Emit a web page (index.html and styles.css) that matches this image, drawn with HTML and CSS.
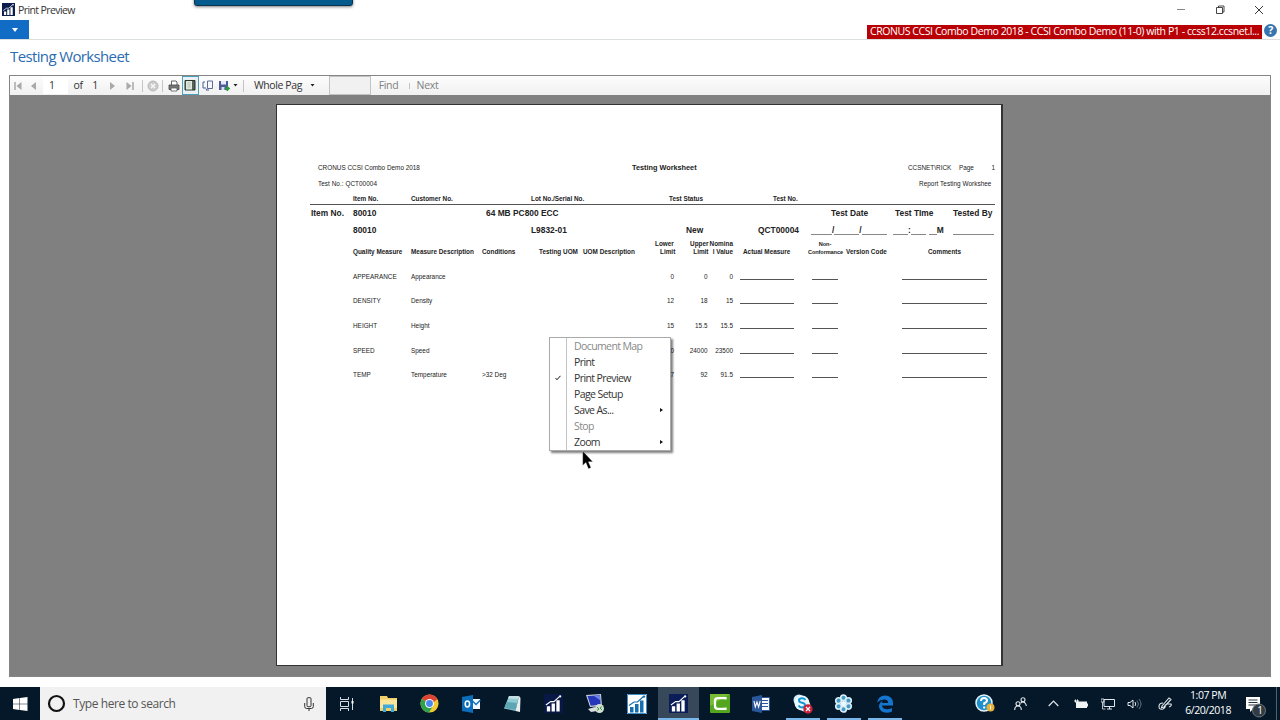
FILE: index.html
```html
<!DOCTYPE html>
<html lang="en">
<head>
    <meta charset="UTF-8">
    <meta name="viewport" content="width=device-width, initial-scale=1.0">
    <title>Print Preview</title>
    <link rel="stylesheet" href="styles.css">
</head>
<body>
    <svg width="0" height="0" class="defs">
        <symbol id="chart" viewBox="0 0 20 20">
            <path d="M3 13h3.500v5.500H3zM8 10h3.500v8.500H8zM13 6.500h3.500v12H13z" fill="currentColor"/>
            <path d="M2 11.500l5-3.500h3.500L16.500 2.500" fill="none" stroke="currentColor" stroke-width="1.200"/>
            <circle cx="17" cy="2.600" r="1.200" fill="currentColor"/>
        </symbol>
    </svg>

    <div class="share-tab"></div>

    <div class="titlebar">
        <svg class="app-icon" viewBox="0 0 20 20"><rect width="20" height="20" fill="#0b1d4d"/><use href="#chart"/></svg>
        <span class="title">Print Preview</span>
        <div class="window-buttons">
            <svg viewBox="0 0 10 10"><path d="M1 4.500h8" stroke="#888"/></svg>
            <svg viewBox="0 0 10 10"><path d="M1.500 2.500h6v6h-6zM3.500 2.500v-1.500h5.500v6H7.500" fill="none" stroke="#333" stroke-width=".9"/></svg>
            <svg viewBox="0 0 10 10"><path d="M1 1l8 8M9 1l-8 8" stroke="#222" stroke-width=".9"/></svg>
        </div>
    </div>

    <div class="ribbon">
        <div class="file-button"><svg width="6" height="4"><path d="M0 0h6L3 4z" fill="#fff"/></svg></div>
        <div class="company">CRONUS CCSI Combo Demo 2018 - CCSI Combo Demo (11-0) with P1 - ccss12.ccsnet.l...</div>
        <div class="help">?</div>
    </div>

    <h1>Testing Worksheet</h1>

    <div class="viewer">
        <div class="toolbar">
            <div><svg width="8" height="8"><path d="M1 0v8" stroke="#a9a9a9" stroke-width="1.500"/><path d="M7.500 0v8L2.500 4z" fill="#a9a9a9"/></svg></div>
            <div><svg width="6" height="8"><path d="M5 0v8L0 4z" fill="#a9a9a9"/></svg></div>
            <div class="page-input">1</div>
            <div>of</div>
            <div>1</div>
            <div><svg width="6" height="8"><path d="M1 0v8l5-4z" fill="#a9a9a9"/></svg></div>
            <div><svg width="8" height="8"><path d="M.5 0v8l5-4z" fill="#a9a9a9"/><path d="M7 0v8" stroke="#a9a9a9" stroke-width="1.500"/></svg></div>
            <div class="sep"></div>
            <div><svg width="12" height="12"><circle cx="6" cy="6" r="5" fill="#ccc" stroke="#b8b8b8"/><path d="M4 4l4 4M8 4l-4 4" stroke="#f6f6f6" stroke-width="1.500"/></svg></div>
            <div class="sep"></div>
            <div><svg width="12" height="12"><path d="M3.500 5V1h4.500l1 1v3" fill="#fff" stroke="#666"/><path d="M1 5h10v4.500H1z" fill="#777" stroke="#444" stroke-width=".8"/><path d="M3 8h6v3H3z" fill="#fff" stroke="#555" stroke-width=".8"/></svg></div>
            <div class="pressed"><svg width="12" height="11"><path d="M1 .5h10v9.500H1z" fill="#54645a" stroke="#26362e"/><path d="M2 1h6v8.500H2z" fill="#dfe8df"/><path d="M3.500 3h3M3.500 5h3M3.500 7h3" stroke="#a3aaa3" stroke-width=".7"/></svg></div>
            <div><svg width="12" height="11"><path d="M5.500 1h5v7.500h-5z" fill="#f5f7ff" stroke="#5d6c91"/><path d="M1 2v6h3M1 2h2M4 10h3M5 8.500l-1 1.500" fill="none" stroke="#4c5f93"/></svg></div>
            <div><svg width="12" height="12"><path d="M1 1h9v9H1z" fill="#4c5c99"/><path d="M3 1h5v3.500H3z" fill="#e8ecfa"/><path d="M3.500 7h3v3h-3z" fill="#dde"/><path d="M6.500 8.500h4M9 6v5l2.800-2.500z" fill="#2c9b3c" stroke="#2c9b3c"/></svg></div>
            <div><svg width="5" height="3"><path d="M.5 0h4L2.500 2.500z" fill="#222"/></svg></div>
            <div class="sep"></div>
            <div class="zoom-select"><span>Whole Pag</span><svg width="5" height="3"><path d="M.5 0h4L2.500 2.500z" fill="#222"/></svg></div>
            <div class="find-input"></div>
            <div class="muted">Find</div>
            <div class="sep short"></div>
            <div class="muted">Next</div>
        </div>

        <div class="report">
            <div class="row head-a">
                <span>CRONUS CCSI Combo Demo 2018</span>
                <b class="report-title">Testing Worksheet</b>
                <span>CCSNET\RICK</span>
                <span>Page</span>
                <span class="right">1</span>
            </div>
            <div class="row head-b">
                <span>Test No.: QCT00004</span>
                <span>Report Testing Workshee</span>
            </div>
            <div class="row lot-head">
                <span></span>
                <span>Item No.</span>
                <span>Customer No.</span>
                <span>Lot No./Serial No.</span>
                <span>Test Status</span>
                <span>Test No.</span>
            </div>
            <div class="row item">
                <span>Item No.</span>
                <span>80010</span>
                <span>64 MB PC800 ECC</span>
                <span>Test Date</span>
                <span>Test TIme</span>
                <span>Tested By</span>
            </div>
            <div class="row lot">
                <span></span>
                <span>80010</span>
                <span>L9832-01</span>
                <span>New</span>
                <span>QCT00004</span>
                <span class="blanks"><i class="w21"></i>/<i class="w25"></i>/<i class="w25"></i></span>
                <span class="blanks"><i class="w16"></i>:<i class="w16"></i><i class="w8"></i>M</span>
                <span class="blanks"><i class="w41"></i></span>
            </div>
            <div class="row cols col-head">
                <span></span>
                <span>Quality Measure</span>
                <span>Measure Description</span>
                <span>Conditions</span>
                <span>Testing UOM</span>
                <span>UOM Description</span>
                <span class="lower">Lower<br><em>Limit</em></span>
                <span class="right upper">Upper<br>Limit</span>
                <span class="right">Nomina<br>l Value</span>
                <span class="actual">Actual Measure</span>
                <span class="center narrow">Non-<br>Conformance</span>
                <span class="version">Version Code</span>
                <span class="center">Comments</span>
            </div>
            <div class="row cols measure">
                <span></span><span>APPEARANCE</span><span>Appearance</span><span></span><span></span><span></span>
                <span class="right">0</span><span class="right">0</span><span class="right">0</span>
                <i class="line actual-line"></i><i class="line non-line"></i><span></span><i class="line"></i>
            </div>
            <div class="row cols measure">
                <span></span><span>DENSITY</span><span>Density</span><span></span><span></span><span></span>
                <span class="right">12</span><span class="right">18</span><span class="right">15</span>
                <i class="line actual-line"></i><i class="line non-line"></i><span></span><i class="line"></i>
            </div>
            <div class="row cols measure">
                <span></span><span>HEIGHT</span><span>Height</span><span></span><span></span><span></span>
                <span class="right">15</span><span class="right">15.5</span><span class="right">15.5</span>
                <i class="line actual-line"></i><i class="line non-line"></i><span></span><i class="line"></i>
            </div>
            <div class="row cols measure">
                <span></span><span>SPEED</span><span>Speed</span><span></span><span></span><span></span>
                <span class="right">0</span><span class="right">24000</span><span class="right">23500</span>
                <i class="line actual-line"></i><i class="line non-line"></i><span></span><i class="line"></i>
            </div>
            <div class="row cols measure">
                <span></span><span>TEMP</span><span>Temperature</span><span>&gt;32 Deg</span><span></span><span></span>
                <span class="right">7</span><span class="right">92</span><span class="right">91.5</span>
                <i class="line actual-line"></i><i class="line non-line"></i><span></span><i class="line"></i>
            </div>
        </div>
    </div>

    <div class="context-menu">
        <div class="menu-item disabled"><i></i><span>Document Map</span></div>
        <div class="menu-item"><i></i><span>Print</span></div>
        <div class="menu-item"><i><svg width="6" height="6"><path d="M.5 3l1.500 1.700L5.500 .8" fill="none" stroke="#111"/></svg></i><span>Print Preview</span></div>
        <div class="menu-item"><i></i><span>Page Setup</span></div>
        <div class="menu-item sub"><i></i><span>Save As...</span></div>
        <div class="menu-item disabled"><i></i><span>Stop</span></div>
        <div class="menu-item sub"><i></i><span>Zoom</span></div>
    </div>
    <svg class="cursor" width="12" height="20" viewBox="0 0 12 20"><path d="M.7 1v14.500l3.200-3 2.500 6.300 2.600-1-2.600-6h4.400z" fill="#000" stroke="#fff" stroke-width=".3"/></svg>

    <div class="taskbar">
        <div class="start"><svg width="15" height="14" viewBox="0 0 15 14"><path d="M0 2l6.500-1v5.700H0zM7 .9L14.500 0v6.700H7zM0 7.200h6.500V13L0 12zM7 7.200h7.500V14L7 13z" fill="#fff"/></svg></div>
        <div class="search">
            <svg width="19" height="19"><circle cx="9.500" cy="9.500" r="7.500" fill="none" stroke="#111" stroke-width="2.200"/></svg>
            <span>Type here to search</span>
            <svg class="mic" width="10" height="14"><rect x="3" y=".7" width="4" height="9" rx="1" fill="none" stroke="#333"/><path d="M.7 6v3.500q0 2 2 2h4.600q2 0 2-2V6M5 11.500V14" fill="none" stroke="#333"/></svg>
        </div>
        <div class="apps">
            <div><svg width="15" height="14"><path d="M1.500 0v2.500h8V0M1.500 14v-2.500h8V14M1.500 4.500h8v5h-8zM13.500 1v12" fill="none" stroke="#d5dce2"/><path d="M12.500 4h2v2.500h-2z" fill="#fff"/></svg></div>
            <div><svg width="19" height="17"><path d="M1 1h7l1 2h9v13H1z" fill="#f1cf69"/><path d="M1 4.500h17V13H1z" fill="#fbe59a"/><path d="M4 17V9.500h11V17h-3v-4H7v4z" fill="#3fa9dc"/></svg></div>
            <div><svg width="19" height="19" viewBox="-10 -10 20 20"><circle r="9.500" fill="#f2c931"/><path d="M0 0L-8.200-4.700A9.500 9.500 0 0 1 8.200-4.700z" fill="#dc4335"/><path d="M0 0l-8.200-4.700A9.500 9.500 0 0 0-.5 9.500L4 2z" fill="#2da14c"/><path d="M0-4.700h8.200L4-1z" fill="#dc4335"/><circle r="4.700" fill="#fff"/><circle r="3.600" fill="#4a87ee"/></svg></div>
            <div><svg width="19" height="18"><path d="M9 4h9v10H9z" fill="#f2f8fd"/><path d="M10 5.500l4 4 4.500-4.500" fill="none" stroke="#0b6ebd" stroke-width="1.300"/><path d="M0 2l11-2v18L0 16z" fill="#0b6ebd"/><ellipse cx="5.400" cy="9" rx="2.200" ry="2.900" fill="none" stroke="#fff" stroke-width="1.500"/></svg></div>
            <div><svg width="19" height="18"><path d="M6 1h10l-3.500 15L1 13.500z" fill="#8ecbd5"/><path d="M16 1l1.500 2-.5 14-4.500-1z" fill="#e7eff0"/><path d="M6 1h10l-.7 3L5 3.500z" fill="#c5dfe2"/><path d="M4 7l10 1-1.500 7-11-2z" fill="#5ca6b4"/></svg></div>
            <div><svg width="19" height="19" viewBox="0 0 20 20" color="#fff"><rect width="20" height="20" fill="#071846"/><use href="#chart"/></svg></div>
            <div><svg width="20" height="20"><path d="M1 1l15-1 1 12-12 1z" fill="#c8cfdb"/><path d="M2.500 2l12.500-.8.7 9.500-10 1z" fill="#2637ba"/><path d="M9 2l6-.6.5 5z" fill="#6f83e8"/><path d="M3 15l7-2 2 4-6 1z" fill="#d9dde2"/><circle cx="14.500" cy="14.500" r="4.500" fill="#d4dfd1"/><path d="M12 13l2 2-2 1.500M17 12.500l-2 1.500 2 2" fill="none" stroke="#3b9a49"/></svg></div>
            <div><svg width="20" height="20" viewBox="0 0 20 20" color="#156eb0"><rect width="20" height="20" fill="#fff"/><use href="#chart"/><path d="M.5.5h19v19H.5z" fill="none" stroke="#3c8dc8"/></svg></div>
            <div class="active"><svg width="19" height="19" viewBox="0 0 20 20" color="#fff"><rect width="20" height="20" fill="#0a1d59"/><use href="#chart"/></svg></div>
            <div><svg width="20" height="19"><rect width="20" height="19" rx="1" fill="#55a61f"/><path d="M0 0h20L0 12z" fill="#76bd35"/><path d="M15.500 5.500V4.200H7.800Q5 4.200 5 7v5q0 2.800 2.800 2.800h7.700v-1.300" fill="none" stroke="#fff" stroke-width="2.300"/></svg></div>
            <div><svg width="18" height="18"><path d="M9 2.500h8.500v13H9z" fill="#f5f8fc" stroke="#2b579a"/><path d="M10 5.500h6M10 8.500h6M10 11.500h6" stroke="#2b579a"/><path d="M0 2l10-2v18L0 16z" fill="#2b579a"/><path d="M2 6l1.300 6L5 7l1.600 5L8.200 6" fill="none" stroke="#fff" stroke-width="1.100"/></svg></div>
            <div class="running"><svg width="20" height="20"><circle cx="6" cy="6" r="5.500" fill="#d4eefa"/><circle cx="12" cy="12" r="5.500" fill="#d4eefa"/><circle cx="9" cy="9" r="7.500" fill="#edf9ff"/><path d="M12.500 6Q11 4 8.500 4.300 5.800 4.700 6 6.600 6.200 8.200 9 8.700q3.200.6 3 2.700-.2 2-3.200 2Q6.500 13.400 5.500 11.500" fill="none" stroke="#1498d5" stroke-width="2"/><circle cx="15" cy="15" r="4.700" fill="#cb2037"/><path d="M13 13l4 4M17 13l-4 4" stroke="#fff" stroke-width="1.200"/></svg></div>
            <div class="running"><svg width="19" height="19" viewBox="-10 -10 20 20"><g fill="#459ac3" stroke="#d8eff8" stroke-width="1.700"><circle cy="-6" r="3"/><circle cx="5.200" cy="-3" r="3"/><circle cx="5.200" cy="3" r="3"/><circle cy="6" r="3"/><circle cx="-5.200" cy="3" r="3"/><circle cx="-5.200" cy="-3" r="3"/></g><circle r="2.700" fill="#eef9ff"/></svg></div>
            <div class="running"><svg width="18" height="18"><path d="M1 7.500Q2.500.5 9 .5q7.500 0 8 7.500v2.500H6q.5 3.800 5 3.800 2.500 0 5-1.300v3.500q-2.500 1.300-5.500 1.300Q4 17.500 3 12 2.600 8 7 5.500 5.500 7 5.700 8h6.500q0-3.500-4-3.500Q4 4.500 1 7.500z" fill="#1476cf"/></svg></div>
        </div>
        <div class="tray">
            <div><svg width="20" height="19"><circle cx="9" cy="9" r="8" fill="#218fca" stroke="#e6f4fa" stroke-width="1.500"/><path d="M6 7q0-3 3-3t3 2.600Q12 8.300 9.200 9.300V11M9.200 12.500v2" fill="none" stroke="#fff" stroke-width="2"/><circle cx="15.500" cy="13.500" r="4" fill="#e7b13b"/><path d="M15.500 11.500v4" stroke="#fff"/></svg></div>
            <div><svg width="13" height="14"><g fill="none" stroke="#e4e8eb" stroke-width="1.100"><circle cx="9" cy="2.700" r="2"/><circle cx="4" cy="6.700" r="2"/><path d="M.7 13q0-4 3.300-4t3.300 4M6.700 6Q9 4 11 6q1.200 1.400 1.300 3"/></g></svg></div>
            <div><svg width="11" height="7"><path d="M.7 6L5.500 1.200 10.300 6" fill="none" stroke="#e4e8eb" stroke-width="1.200"/></svg></div>
            <div><svg width="14" height="10"><path d="M2 2.500h11v6.500H2z" fill="#f1f3f5"/><path d="M13 4.500h1v3h-1z" fill="#eee"/><path d="M0 2h5M1.500.5v3M3.500.5v3" stroke="#eee"/></svg></div>
            <div><svg width="14" height="12"><path d="M3 1.500h10.500v7H3zM6 11h5M8.500 8.500V11" fill="none" stroke="#e4e8eb"/><path d="M0 1h3v3H0zM1.500 4v7h3" fill="none" stroke="#e4e8eb" stroke-width=".8"/></svg></div>
            <div><svg width="15" height="12"><path d="M1 4.500h2L6 2v8L3 7.500H1z" fill="none" stroke="#e4e8eb"/><path d="M8 4q1.500 2 0 4" fill="none" stroke="#e4e8eb"/><path d="M10 2.500q3 3.500 0 7M12 1q4 5 0 10" fill="none" stroke="#66737e"/></svg></div>
            <div><svg width="14" height="13"><path d="M5 6Q1 6 1 9.500T5 12q3-1 2-4.500M4 9L11 1l2 1.500L6 10l-2.500.7zM9 7h4q1 2-2 3" fill="none" stroke="#e4e8eb" stroke-width="1.100"/></svg></div>
        </div>
        <div class="clock">1:07 PM<br>6/20/2018</div>
        <div class="notify"><svg width="20" height="21"><path d="M0 0h14v12H7l-3 3v-3H0z" fill="#fff"/><path d="M2.500 3h9M2.500 5.500h9M2.500 8h9" stroke="#26323d"/><circle cx="13" cy="13.500" r="6.500" fill="#333b42" stroke="#6d747a"/></svg><span>1</span></div>
    </div>
</body>
</html>
```
FILE: styles.css
```css
* {
    box-sizing: border-box;
}
body {
    margin: 0;
    width: 1280px;
    height: 720px;
    overflow: hidden;
    display: flex;
    flex-direction: column;
    background-color: #fff;
    font-family: "Open Sans", "Noto Sans", sans-serif;
    font-size: 10.5px;
    letter-spacing: -0.5px;
    color: #333;
}
svg {
    display: block;
    flex: none;
}
.defs {
    position: absolute;
}
.share-tab {
    position: absolute;
    left: 194px;
    top: -5px;
    width: 159px;
    height: 11px;
    background-color: #045a8d;
    border: 1px solid #06334f;
    border-radius: 3px;
    box-shadow: 0 1px 3px rgba(0,0,0,0.5);
}

/* window frame */
.titlebar {
    height: 19px;
    display: flex;
    align-items: center;
    padding-left: 2px;
}
.app-icon {
    width: 13px;
    height: 13px;
    color: #fff;
}
.title {
    margin-left: 3px;
    letter-spacing: -0.6px;
}
.window-buttons {
    display: flex;
    gap: 29px;
    margin-left: auto;
    padding-right: 16px;
}
.window-buttons svg {
    width: 10px;
    height: 10px;
}
.ribbon {
    height: 21px;
    display: flex;
    align-items: center;
    border-bottom: 1px solid #dcdfe0;
}
.file-button {
    width: 29px;
    height: 19px;
    margin-top: 1px;
    display: flex;
    align-items: center;
    justify-content: center;
    background-color: #116cc6;
}
.company {
    width: 395px;
    height: 14px;
    margin-left: auto;
    margin-top: 5px;
    padding-left: 3px;
    line-height: 13px;
    background-color: #b90005;
    color: #fff;
    white-space: nowrap;
    letter-spacing: -0.42px;
}
.help {
    width: 13px;
    height: 13px;
    margin: 2px 3px 0 2px;
    border-radius: 50%;
    background-color: #3875ae;
    color: #fff;
    font-weight: bold;
    line-height: 13px;
    text-align: center;
}
h1 {
    margin: 0;
    height: 35px;
    padding-left: 10px;
    font-size: 15px;
    font-weight: normal;
    line-height: 33px;
    letter-spacing: -0.63px;
    color: #2b6cb0;
}

/* report viewer */
.viewer {
    width: 1262px;
    height: 602px;
    margin-left: 9px;
    border: 1px solid #858585;
    background-color: #808080;
}
.toolbar {
    height: 19px;
    display: grid;
    grid-template-columns: 15px 18px 25px 20px 14px 19px 17px 8px 13px 7px 15px 18px 17px 15px 9px 7px 82px 42px 35px 6px 31px;
    align-items: center;
    justify-items: center;
    line-height: 13px;
    background: linear-gradient(#fdfdfd, #f0f0f0);
}
.toolbar .page-input {
    width: 25px;
    height: 17px;
    padding-left: 6px;
    line-height: 16px;
    background-color: #fff;
}
.sep {
    width: 1px;
    height: 12px;
    background-color: #c4c4c4;
}
.sep.short {
    height: 6px;
}
.pressed {
    width: 17px;
    height: 19px;
    display: flex;
    align-items: center;
    justify-content: center;
    border: 1px solid #4f9db8;
    background-color: #e9f1f4;
}
.zoom-select {
    width: 82px;
    display: flex;
    align-items: center;
    gap: 8px;
    padding-left: 7px;
}
.zoom-select span {
    width: 48px;
    letter-spacing: -0.4px;
    white-space: nowrap;
}
.find-input {
    width: 42px;
    height: 19px;
    border: 1px solid #c3c3c3;
    background-color: #f1f1f1;
}
.muted {
    color: #808080;
    letter-spacing: -0.3px;
}

/* printed page */
.report {
    width: 727px;
    height: 562px;
    margin: 9px 0 0 266px;
    padding: 55px 6px 0 33px;
    background-color: #fff;
    border: 1px solid #333;
    border-right-width: 2px;
    font-family: "Liberation Sans", Arial, sans-serif;
    font-size: 6.4px;
    letter-spacing: 0;
    color: #222;
}
.row {
    display: grid;
    align-items: center;
    white-space: nowrap;
}
.right {
    text-align: right;
}
.center {
    text-align: center;
}
.head-a {
    height: 15px;
    padding-left: 8px;
    grid-template-columns: 314px 276px 51px 20px 16px;
}
.report-title {
    font-size: 7.3px;
}
.head-b {
    height: 16px;
    padding-left: 8px;
    grid-template-columns: 601px 76px;
    letter-spacing: 0.04px;
}
.lot-head {
    height: 14px;
    padding-top: 1px;
    grid-template-columns: 43px 58px 120px 138px 104px 60px;
    border-bottom: 1px solid #555;
    font-weight: bold;
}
.item {
    height: 16px;
    padding-left: 1px;
    grid-template-columns: 42px 133px 345px 64px 58px 42px;
    font-size: 8.4px;
    font-weight: bold;
}
.lot {
    height: 17px;
    grid-template-columns: 43px 178px 155px 72px 53px 82px 60px 41px;
    font-size: 8.4px;
    font-weight: bold;
}
.blanks {
    height: 10px;
    display: flex;
    align-items: flex-end;
}
.blanks i {
    border-bottom: 1px solid #888;
}
.w21 { width: 21px; }
.w25 { width: 25px; }
.w16 { width: 15px; }
.w8 { width: 8px; margin-left: 3px; }
.w41 { width: 41px; }
.cols {
    grid-template-columns: 43px 58px 71px 57px 44px 57px 34px 33.5px 25.5px 75px 34px 60px 85px;
}
.col-head {
    height: 18px;
    margin-bottom: 8px;
    align-items: end;
    font-weight: bold;
    line-height: 8px;
}
.lower {
    padding-left: 15px;
}
.lower em {
    padding-left: 5px;
    font-style: normal;
}
.upper {
    margin-right: -1px;
}
.actual {
    padding-left: 10px;
}
.narrow {
    font-size: 5.6px;
    letter-spacing: -0.1px;
}
.version {
    padding-left: 4px;
}
.measure {
    height: 24.65px;
}
.line {
    margin-top: 6px;
    border-bottom: 1px solid #555;
}
.actual-line {
    width: 54px;
    margin-left: 7px;
}
.non-line {
    width: 26px;
    margin-left: 4px;
}

/* right click menu */
.context-menu {
    position: absolute;
    left: 549px;
    top: 337px;
    width: 122px;
    height: 114px;
    background-color: #fff;
    border: 1px solid #aaa;
    box-shadow: 2px 2px 2px rgba(0,0,0,0.5);
}
.menu-item {
    height: 16px;
    display: flex;
    align-items: center;
    letter-spacing: -0.6px;
}
.menu-item i {
    width: 17px;
    height: 16px;
    margin-right: 7px;
    display: flex;
    align-items: center;
    justify-content: center;
    border-right: 1px solid #c4c4c4;
}
.disabled {
    color: #888;
}
.sub::after {
    content: "";
    margin-left: auto;
    margin-right: 7px;
    border: 2.5px solid transparent;
    border-left: 3px solid #111;
    border-right: none;
}
.cursor {
    position: absolute;
    left: 582px;
    top: 450px;
}

/* taskbar */
.taskbar {
    height: 33px;
    margin-top: auto;
    display: flex;
    background-color: #04182a;
    color: #fff;
}
.start {
    width: 40px;
    display: flex;
    align-items: center;
    justify-content: center;
}
.search {
    width: 286px;
    display: flex;
    align-items: center;
    padding: 0 12px 0 7px;
    background-color: #f1f1f1;
    color: #555;
    font-size: 12px;
    letter-spacing: -0.42px;
}
.search span {
    margin-left: 7px;
}
.mic {
    margin-left: auto;
}
.apps {
    display: grid;
    grid-template-columns: repeat(14, 41.45px);
}
.apps div {
    display: flex;
    align-items: center;
    justify-content: center;
}
.apps .active {
    background-color: #37485a;
    box-shadow: inset 0 -2px #79b6ea;
}
.apps .running {
    background: linear-gradient(#79b6ea, #79b6ea) center bottom / 34px 2px no-repeat;
}
.tray {
    margin-left: 61px;
    display: grid;
    grid-template-columns: 36px 35px 30px 26px 27px 27px 34px;
}
.tray div {
    display: flex;
    align-items: center;
    justify-content: center;
}
.clock {
    width: 52px;
    font-size: 10.5px;
    line-height: 15px;
    padding-top: 1px;
    text-align: center;
    letter-spacing: -0.45px;
}
.notify {
    position: relative;
    width: 43px;
    padding: 10px 0 0 12px;
    border-right: 1px solid #53606c;
}
.notify span {
    position: absolute;
    left: 23px;
    top: 16px;
    font-size: 10px;
}
```
